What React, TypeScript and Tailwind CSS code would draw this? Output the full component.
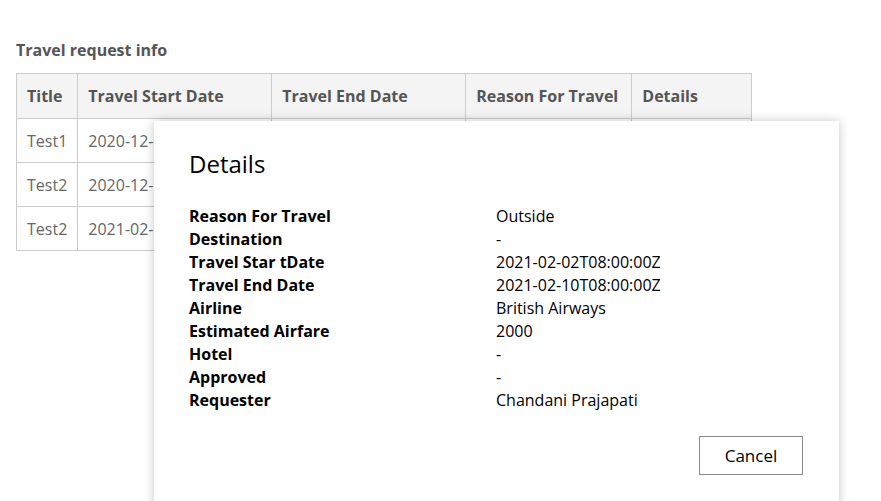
import React from 'react';

const rows = [
  { title: 'Test1', start: '2020-12-01T08:00:00Z', end: '2020-12-05T08:00:00Z', reason: 'Inside', },
  { title: 'Test2', start: '2020-12-10T08:00:00Z', end: '2020-12-15T08:00:00Z', reason: 'Outside', },
  { title: 'Test2', start: '2021-02-02T08:00:00Z', end: '2021-02-10T08:00:00Z', reason: 'Outside', },
];

const details = [
  ['Reason For Travel', 'Outside'],
  ['Destination', '-'],
  ['Travel Star tDate', '2021-02-02T08:00:00Z'],
  ['Travel End Date', '2021-02-10T08:00:00Z'],
  ['Airline', 'British Airways'],
  ['Estimated Airfare', '2000'],
  ['Hotel', '-'],
  ['Approved', '-'],
  ['Requester', 'Chandani Prajapati'],
];

export default function App() {
  return (
    <div
      className="relative w-[881px] h-[501px] overflow-hidden bg-white"
      style={{ fontFamily: '"Open Sans", "Noto Sans", sans-serif' }}
    >
      <div className="pl-4 pt-[39px]">
        <h3 className="text-[16px] font-bold text-[#555] leading-[22px]">Travel request info</h3>

        <table className="mt-[12px] border-collapse text-[16px]">
          <thead>
            <tr className="bg-[#f4f4f4] h-[45px] text-left text-[#555]">
              <th className="w-[61px] border border-[#cccccc] px-[10px] font-bold">Title</th>
              <th className="w-[194px] border border-[#cccccc] px-[10px] font-bold">Travel Start Date</th>
              <th className="w-[194px] border border-[#cccccc] px-[10px] font-bold">Travel End Date</th>
              <th className="w-[166px] border border-[#cccccc] px-[10px] font-bold">Reason For Travel</th>
              <th className="w-[120px] border border-[#cccccc] px-[10px] font-bold">Details</th>
            </tr>
          </thead>
          <tbody className="text-[#666]">
            {rows.map((r, i) => (
              <tr key={i} className="h-[44px]">
                <td className="border border-[#cccccc] px-[10px]">{r.title}</td>
                <td className="border border-[#cccccc] px-[10px]">{r.start}</td>
                <td className="border border-[#cccccc] px-[10px]">{r.end}</td>
                <td className="border border-[#cccccc] px-[10px]">{r.reason}</td>
                <td className="border border-[#cccccc] px-[10px]">View</td>
              </tr>
            ))}
          </tbody>
        </table>
      </div>

      {/* dialog */}
      <div className="absolute left-[154px] top-[121px] w-[685px] h-[420px] bg-white shadow-[0_0_10px_rgba(0,0,0,0.22)] px-[35px] pt-[27px]">
        <h2 className="text-[24px] text-black leading-[32px]">Details</h2>
        <div className="mt-[25px] text-[16px] leading-[23px] text-black">
          {details.map(([k, v]) => (
            <div key={k} className="flex">
              <div className="w-[307px] font-bold">{k}</div>
              <div>{v}</div>
            </div>
          ))}
        </div>
        <div className="mt-[24px] flex justify-end pr-px">
          <button className="w-[104px] h-[39px] border border-[#8a8a8a] bg-white text-[17px] text-black">
            Cancel
          </button>
        </div>
      </div>
    </div>
  );
}
